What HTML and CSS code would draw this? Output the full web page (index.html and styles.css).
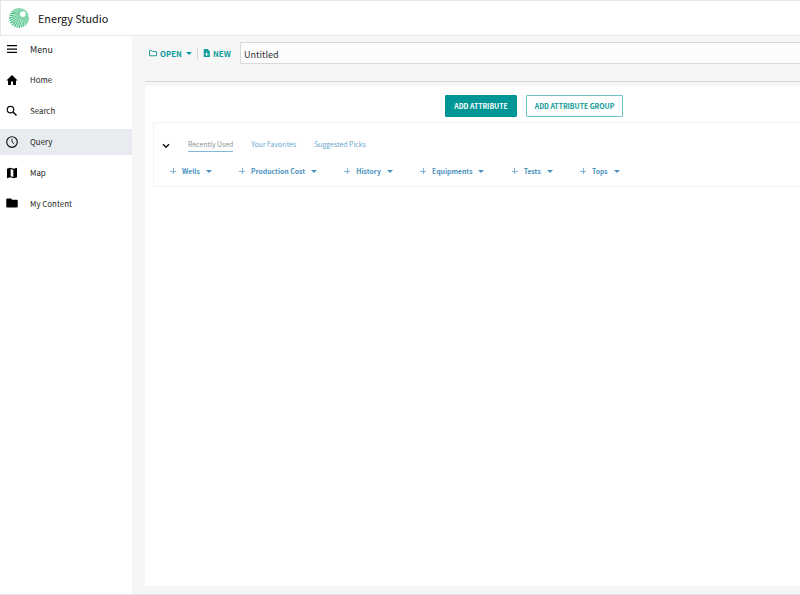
FILE: index.html
```html
<!DOCTYPE html>
<html lang="en">
<head>
    <meta charset="UTF-8">
    <meta name="viewport" content="width=device-width, initial-scale=1.0">
    <title>Energy Studio</title>
    <link rel="stylesheet" href="styles.css">
</head>
<body>
    <header class="header">
        <svg class="logo" viewBox="0 0 20 20">
            <clipPath id="globe"><circle cx="10" cy="10" r="10"/></clipPath>
            <g clip-path="url(#globe)">
                <rect width="20" height="20" fill="#e2f6ea"/>
                <circle cx="13.5" cy="6.3" r="9" fill="none" stroke="#43bd80" stroke-width="18" stroke-dasharray="0.86 0.71"/>
                <circle cx="13.5" cy="6.3" r="5" fill="#7fd3a8" opacity="0.7"/>
                <circle cx="13.9" cy="6.1" r="2.9" fill="#fff"/>
            </g>
        </svg>
        <h1>Energy Studio</h1>
    </header>

    <div class="container">
        <nav class="sidebar">
            <a class="nav-item menu">
                <svg viewBox="0 0 24 24"><path d="M2 4h20v2.5H2zM2 10.75h20v2.5H2zM2 17.5h20V20H2z"/></svg>
                <span>Menu</span>
            </a>
            <a class="nav-item">
                <svg viewBox="0 0 24 24"><path d="M10 22v-7h4v7h6v-9h3.2L12 2 .8 13H4v9z"/></svg>
                <span>Home</span>
            </a>
            <a class="nav-item">
                <svg viewBox="0 0 24 24"><circle cx="9" cy="9" r="6.5" fill="none" stroke="#111" stroke-width="2.5"/><path d="M14 14l7 7" stroke="#111" stroke-width="3.2"/></svg>
                <span>Search</span>
            </a>
            <a class="nav-item active">
                <svg viewBox="0 0 24 24"><circle cx="12" cy="12" r="10.6" fill="none" stroke="#111" stroke-width="2.3"/><path d="M12 5.5V12l4.5 4" fill="none" stroke="#111" stroke-width="1.8"/></svg>
                <span>Query</span>
            </a>
            <a class="nav-item">
                <svg viewBox="0 0 24 24"><path fill-rule="evenodd" d="M2 3.5L8.5 1.5l7 2.2L22 1.5v19l-6.5 2-7-2.2L2 22.5zM9.3 4.2v14.1l5.4 1.7V5.9z"/></svg>
                <span>Map</span>
            </a>
            <a class="nav-item">
                <svg viewBox="0 0 24 24"><path d="M2.5 3H10l2.3 2.6h9.2a2 2 0 0 1 2 2V19a2 2 0 0 1-2 2h-19a2 2 0 0 1-2-2V5a2 2 0 0 1 2-2z"/></svg>
                <span>My Content</span>
            </a>
        </nav>

        <main class="main">
            <div class="toolbar">
                <button class="tool open">
                    <svg viewBox="0 0 16 14"><path d="M1 2h5l1.6 2H15v8.5H1z" fill="none" stroke="#0a9c98" stroke-width="1.8"/></svg>
                    <span>OPEN</span>
                    <i class="caret"></i>
                </button>
                <button class="tool new">
                    <svg viewBox="0 0 14 16"><path fill-rule="evenodd" d="M1.5 0H9l4.5 4.5V16h-12zM6.3 6.5v2.8H3.7v1.9h2.6V14h2v-2.800h2.600V9.300H8.300V6.500z"/></svg>
                    <span>NEW</span>
                </button>
                <input type="text" class="title-input" value="Untitled">
            </div>

            <section class="panel">
                <div class="actions">
                    <button class="btn primary">ADD ATTRIBUTE</button>
                    <button class="btn">ADD ATTRIBUTE GROUP</button>
                </div>
                <div class="picker">
                    <div class="tabs">
                        <svg class="chevron" viewBox="0 0 8 6"><path d="M1 1.200L4 4.200 7 1.200" fill="none" stroke="#111" stroke-width="1.500"/></svg>
                        <a class="tab selected">Recently Used</a>
                        <a class="tab">Your Favorites</a>
                        <a class="tab">Suggested Picks</a>
                    </div>
                    <div class="attributes">
                        <div class="attribute"><i class="plus"></i><span>Wells</span><i class="caret"></i></div>
                        <div class="attribute"><i class="plus"></i><span>Production Cost</span><i class="caret"></i></div>
                        <div class="attribute"><i class="plus"></i><span>History</span><i class="caret"></i></div>
                        <div class="attribute"><i class="plus"></i><span>Equipments</span><i class="caret"></i></div>
                        <div class="attribute"><i class="plus"></i><span>Tests</span><i class="caret"></i></div>
                        <div class="attribute"><i class="plus"></i><span>Tops</span><i class="caret"></i></div>
                    </div>
                </div>
            </section>
        </main>
    </div>
</body>
</html>
```
FILE: styles.css
```css
* {
    box-sizing: border-box;
}
body {
    margin: 0;
    height: 595px;
    display: flex;
    flex-direction: column;
    overflow: hidden;
    font-family: "Noto Sans CJK SC", "Noto Sans", sans-serif;
    color: #222;
    background-color: #fff;
    border-bottom: 1px solid #e4e4e4;
}
button, input {
    font-family: inherit;
    margin: 0;
}
span, a {
    white-space: nowrap;
}
.header {
    height: 36px;
    flex: none;
    display: flex;
    align-items: center;
    padding-left: 8px;
    border: 1px solid #e6e6e6;
    border-right: none;
}
.logo {
    width: 20px;
    height: 20px;
}
.header h1 {
    margin: 0 0 0 9px;
    font-size: 10.8px;
    line-height: 20px;
    font-weight: 400;
    color: #111;
}
.container {
    flex: 1;
    display: flex;
}
.sidebar {
    width: 132px;
    flex: none;
}
.nav-item {
    display: flex;
    align-items: center;
    height: 26px;
    margin-bottom: 4.9px;
    padding-left: 6px;
    font-size: 7.9px;
    line-height: 17px;
}
.nav-item.menu {
    font-size: 8.8px;
}
.nav-item.active {
    background-color: #e8ecf1;
}
.nav-item svg {
    width: 12px;
    height: 12px;
    margin-right: 12px;
}
.main {
    flex: 1;
    min-width: 0;
    padding-left: 13px;
    background-color: #f6f6f6;
}
.toolbar {
    display: flex;
    align-items: flex-start;
    height: 46px;
    padding: 6px 0 0 4px;
    margin-bottom: 4px;
    border-bottom: 1px solid #d9d9d9;
}
.tool {
    display: flex;
    align-items: center;
    height: 12px;
    margin-top: 5px;
    padding: 0;
    border: none;
    background: none;
    color: #0a9c98;
    font-size: 7.8px;
    font-weight: 700;
    line-height: 13px;
}
.tool svg {
    height: 8px;
    margin-right: 3px;
    fill: #0a9c98;
}
.open {
    width: 49px;
    border-right: 1px solid #d6d6d6;
}
.open svg {
    width: 8px;
}
.open .caret {
    margin-left: 4px;
}
.new {
    width: 42px;
    padding-left: 5px;
}
.new svg {
    width: 7px;
}
.caret {
    flex: none;
    border: 3px solid transparent;
    border-top-color: currentColor;
    border-bottom: none;
}
.title-input {
    flex: 1;
    height: 22px;
    padding: 1px 4px 0 3px;
    border: 1px solid #d9d9d9;
    border-right: none;
    border-radius: 2px 0 0 2px;
    background-color: #fcfcfc;
    color: #333;
    font-size: 9.1px;
}
.panel {
    height: 499.5px;
    padding: 9px 0 0 8px;
    background-color: #fff;
}
.actions {
    display: flex;
    gap: 9px;
    padding-left: 292px;
    margin-bottom: 5px;
}
.btn {
    width: 97px;
    height: 22px;
    padding: 0;
    border: 1px solid #6dc6c3;
    border-radius: 1px;
    background-color: #fff;
    color: #0a9996;
    font-size: 6.85px;
    font-weight: 700;
    line-height: 20px;
    white-space: nowrap;
}
.btn.primary {
    width: 72px;
    border-color: #009696;
    background-color: #009696;
    color: #fff;
}
.picker {
    height: 65px;
    border: 1px solid #f2f2f2;
    border-right: none;
    border-radius: 2px 0 0 2px;
}
.tabs {
    display: flex;
    align-items: center;
    height: 14px;
    margin-top: 15px;
    padding-left: 8px;
    gap: 18px;
    font-size: 6.87px;
    line-height: 13px;
    color: #69a8d0;
}
.chevron {
    width: 8px;
    height: 6px;
    margin-top: 2px;
}
.tab {
    border-bottom: 1px solid transparent;
}
.tab.selected {
    color: #8f8f8f;
    border-bottom-color: #82b8da;
}
.attributes {
    display: flex;
    gap: 27.4px;
    margin-top: 13px;
    padding-left: 16px;
    color: #4a93c0;
    font-size: 6.85px;
    font-weight: 700;
    line-height: 12px;
}
.attribute {
    display: flex;
    align-items: center;
    gap: 5.9px;
}
.plus {
    width: 6px;
    height: 6px;
    background: linear-gradient(#7fb3d4, #7fb3d4) center / 6px 1px no-repeat,
        linear-gradient(#7fb3d4, #7fb3d4) center / 1px 6px no-repeat;
}
```
